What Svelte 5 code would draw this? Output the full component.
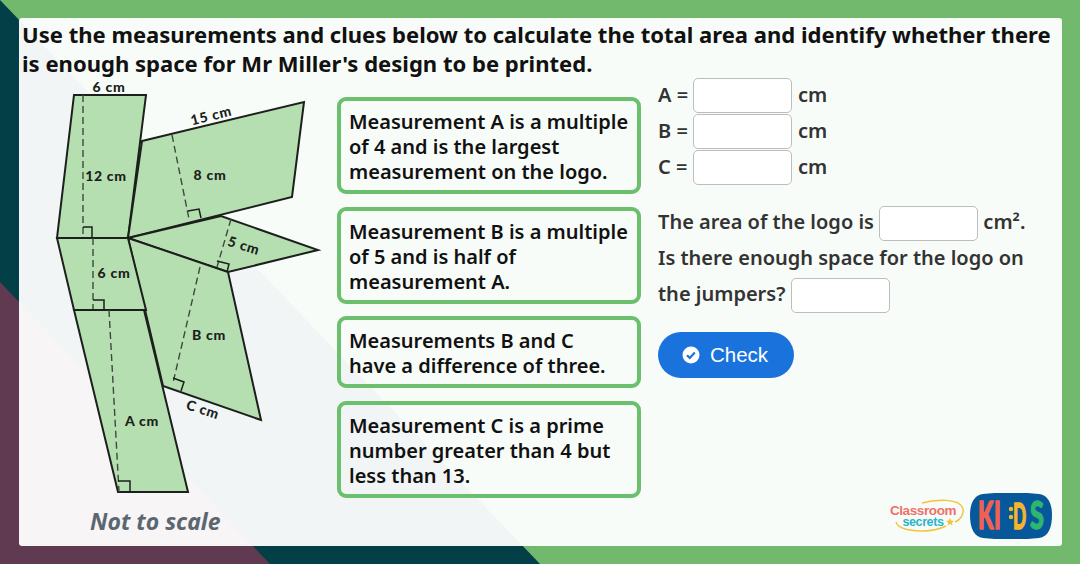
<script>
	const shapes = [
		'74,95 146,95 128,238 57,238',
		'142,141 304,102 292,197 128,238',
		'128,238 221,216 318,250 228,272',
		'128,238 228,272 261,420 163,386',
		'57,238 128,238 146,310 74,310',
		'74,310 144,310 188,492 118,492'
	];
	const dashes = [
		[83, 95, 83, 238],
		[172, 135, 189, 219],
		[231, 219, 217, 267],
		[93, 238, 93, 309],
		[109, 310, 119, 492],
		[200, 267, 173, 383]
	];
	const corners = [
		'83,227 92,227 92,238',
		'188,211 199,209 201,218',
		'217,261 229,264 227,272',
		'93,300 104,300 104,310',
		'118,481 130,481 130,492',
		'173,378 184,382 181,391'
	];
	const labels = [
		{ text: '6 cm', x: 109, y: 86, r: 0 },
		{ text: '15 cm', x: 211, y: 115, r: -14 },
		{ text: '12 cm', x: 106, y: 175, r: 0 },
		{ text: '8 cm', x: 210, y: 174, r: 0 },
		{ text: '5 cm', x: 244, y: 245, r: 17 },
		{ text: '6 cm', x: 114, y: 272, r: 0 },
		{ text: 'B cm', x: 209, y: 334, r: 0 },
		{ text: 'C cm', x: 203, y: 409, r: 18 },
		{ text: 'A cm', x: 142, y: 420, r: 0 }
	];
	const clues = [
		['Measurement A is a multiple', 'of 4 and is the largest', 'measurement on the logo.'],
		['Measurement B is a multiple', 'of 5 and is half of', 'measurement A.'],
		['Measurements B and C', 'have a difference of three.'],
		['Measurement C is a prime', 'number greater than 4 but', 'less than 13.']
	];
	const rows = ['A', 'B', 'C'];
	const kids = [
		{ ch: 'K', x: 9, sx: 0.6, fill: '#f4604f' },
		{ ch: 'I', x: 25, sx: 0.6, fill: '#f4604f' },
		{ ch: 'D', x: 44, sx: 0.47, fill: '#f7b52b' },
		{ ch: 'S', x: 61, sx: 0.68, fill: '#2eb56e' }
	];
</script>

<div class="stage">
	<svg class="backdrop" viewBox="0 0 1080 564" preserveAspectRatio="none" aria-hidden="true">
		<rect width="1080" height="564" fill="#72b96e" />
		<polygon points="0,0 540,564 0,564" fill="#033f47" />
		<polygon points="0,282 270,564 0,564" fill="#5f3a50" />
	</svg>

	<main class="card">
		<h1>Use the measurements and clues below to calculate the total area and identify whether there is enough space for Mr Miller's design to be printed.</h1>

		<div class="content">
			<section class="figure">
				<svg viewBox="19 79 318 420" width="318" height="420">
					{#each shapes as points}
						<polygon {points} fill="#b5dfb1" stroke="#1c1f1c" stroke-width="2" stroke-linejoin="miter" />
					{/each}
					{#each dashes as [x1, y1, x2, y2]}
						<line {x1} {y1} {x2} {y2} stroke="#3d4a3d" stroke-width="1.4" stroke-dasharray="7 4" />
					{/each}
					{#each corners as points}
						<polyline {points} fill="none" stroke="#1c1f1c" stroke-width="1.5" />
					{/each}
					{#each labels as l}
						<text class="label" x={l.x} y={l.y} transform="rotate({l.r} {l.x} {l.y})" text-anchor="middle" dominant-baseline="central">{l.text}</text>
					{/each}
				</svg>
				<p class="note">Not to scale</p>
			</section>

			<section class="clues">
				{#each clues as clue}
					<div class="clue">
						{#each clue as line}
							<div>{line}</div>
						{/each}
					</div>
				{/each}
			</section>

			<section class="answers">
				<div class="measures">
					{#each rows as row}
						<div class="row">
							<span class="letter">{row} =</span>
							<input type="text" aria-label={row} />
							<span class="unit">cm</span>
						</div>
					{/each}
				</div>

				<div class="sentence">
					<div class="line">The area of the logo is <input type="text" aria-label="area" /> cm².</div>
					<div class="line">Is there enough space for the logo on</div>
					<div class="line">the jumpers? <input type="text" aria-label="enough space" /></div>
				</div>

				<button class="check">
					<svg viewBox="0 0 18 18" width="18" height="18" aria-hidden="true">
						<circle cx="9" cy="9" r="8.5" fill="#fff" />
						<path d="M5 9.2l2.8 2.8 5-5.4" fill="none" stroke="#1a73dc" stroke-width="2.2" />
					</svg>
					Check
				</button>

				<div class="logos">
					<svg viewBox="0 0 78 36" width="78" height="36">
						<path d="M8 24c3 10 34 12 50 4" fill="none" stroke="#f5c33b" stroke-width="1.4" />
						<path d="M34 5c14-4 38-5 41 6 1 6-3 11-8 13" fill="none" stroke="#f5c33b" stroke-width="1.4" />
						<text class="brand" x="35" y="17" fill="#f0706a" font-size="13.5" text-anchor="middle">Classroom</text>
						<text class="brand" x="35" y="27.5" fill="#2bb5c9" font-size="12.5" text-anchor="middle">secrets</text>
						<path d="M62 20l1.2 2.6 2.8.3-2.1 1.8.7 2.8-2.6-1.5-2.6 1.5.7-2.8-2.1-1.8 2.8-.3z" fill="#f5c33b" />
					</svg>
					<svg viewBox="0 0 84 46" width="84" height="46">
						<path d="M14 1c18-2 38-2 56 0 8 1 13 8 13 21s-4 22-13 23c-18 2-38 2-56 0C5 44 1 35 1 22S6 2 14 1z" fill="#07589b" />
						{#each kids as k}
							<text class="kids" transform="translate({k.x} 36) scale({k.sx} 1)" fill={k.fill} stroke={k.fill} font-size="37">{k.ch}</text>
						{/each}
						<circle cx="42" cy="16" r="2.2" fill="#f7b52b" />
						<circle cx="42" cy="24" r="2.2" fill="#f7b52b" />
					</svg>
				</div>
			</section>
		</div>
	</main>
</div>

<style>
	:global(body) {
		margin: 0;
	}

	.stage {
		position: relative;
		width: 1080px;
		height: 564px;
		padding: 18px 18px 18px 19px;
		box-sizing: border-box;
		overflow: hidden;
		font-family: "Noto Sans", "Open Sans", sans-serif;
	}

	.backdrop {
		position: absolute;
		inset: 0;
		width: 100%;
		height: 100%;
	}

	.card {
		position: relative;
		height: 528px;
		box-sizing: border-box;
		padding: 2px 0 0;
		background: rgba(255, 255, 255, 0.95);
		border-radius: 3px;
	}

	h1 {
		margin: 0 0 0 3px;
		font-size: 22.05px;
		line-height: 29px;
		font-weight: 700;
		color: #111;
		width: 1036px;
	}

	.content {
		display: flex;
	}

	.figure {
		width: 318px;
		flex: none;
	}

	.figure svg {
		display: block;
		margin-top: 1px;
		overflow: visible;
	}

	.label {
		font-family: Lato, sans-serif;
		font-size: 14px;
		font-weight: 900;
		letter-spacing: 0.7px;
		fill: #1c1f1c;
	}

	.note {
		margin: 7px 0 0;
		padding-left: 71px;
		font-size: 23px;
		line-height: 31px;
		font-weight: 700;
		font-style: italic;
		color: #5c6670;
	}

	.clues {
		width: 304px;
		flex: none;
		margin-top: 19px;
		display: flex;
		flex-direction: column;
		gap: 12.6px;
	}

	.clue {
		box-sizing: border-box;
		border: 4px solid #6cbf6c;
		border-radius: 9px;
		padding: 8px 8px 6px 8px;
		font-size: 20px;
		line-height: 25px;
		font-weight: 600;
		color: #111;
		white-space: nowrap;
	}

	.answers {
		flex: 1;
		margin-left: 17px;
		margin-right: 9px;
		display: flex;
		flex-direction: column;
		font-size: 20px;
		font-weight: 600;
		color: #333;
	}

	input {
		box-sizing: border-box;
		width: 99px;
		height: 35px;
		padding: 0;
		border: 1.5px solid #bdbdbd;
		border-radius: 5px;
		background: #fff;
		vertical-align: middle;
	}

	.measures {
		display: flex;
		flex-direction: column;
		gap: 1px;
	}

	.row {
		display: flex;
		align-items: center;
		gap: 6px;
	}

	.letter {
		width: 29px;
		white-space: nowrap;
		margin-top: -2px;
	}

	.unit {
		margin-top: -2px;
	}

	.sentence {
		margin-top: 19px;
	}

	.line {
		height: 36px;
		line-height: 36px;
		white-space: nowrap;
	}

	.check {
		display: flex;
		align-items: center;
		gap: 10px;
		width: 136px;
		height: 46px;
		margin-top: 20px;
		padding: 0 0 0 24px;
		box-sizing: border-box;
		border: none;
		border-radius: 23px;
		background: #1a73dc;
		color: #fff;
		font-family: "Liberation Sans", Arial, sans-serif;
		font-size: 20.5px;
	}

	.logos {
		display: flex;
		align-items: center;
		justify-content: flex-end;
		gap: 3px;
		margin-top: 115px;
	}

	.brand {
		font-family: "Liberation Sans", sans-serif;
		font-weight: 700;
		letter-spacing: -0.4px;
	}

	.kids {
		font-family: Lato, sans-serif;
		font-weight: 900;
		stroke-width: 1.4px;
		stroke-linejoin: round;
	}
</style>
